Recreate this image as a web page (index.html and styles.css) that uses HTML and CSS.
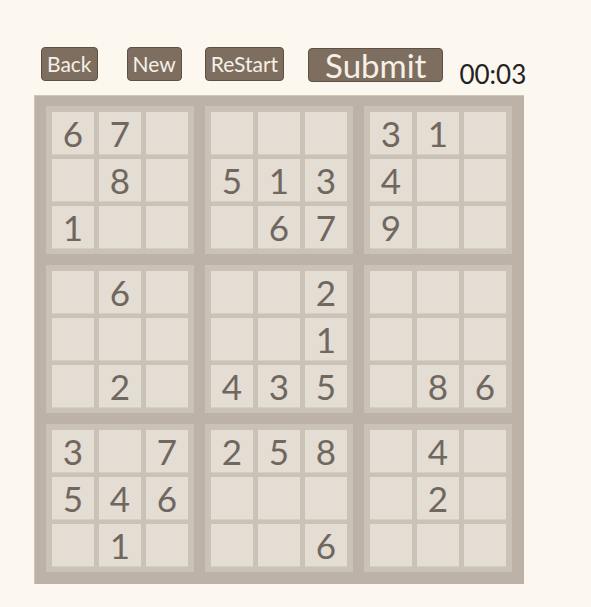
FILE: index.html
```html
<!DOCTYPE html>
<html lang="en">
<head>
<meta charset="utf-8">
<title>Sudoku</title>
<link rel="stylesheet" href="styles.css">
</head>
<body>
<div class="app">
  <div class="toolbar">
    <button class="btn btn-back">Back</button>
    <button class="btn btn-new">New</button>
    <button class="btn btn-restart">ReStart</button>
    <button class="btn btn-submit">Submit</button>
    <span class="timer">00:03</span>
  </div>
  <div class="board">
    <div class="box">
      <div class="cell">6</div><div class="cell">7</div><div class="cell"></div>
      <div class="cell"></div><div class="cell">8</div><div class="cell"></div>
      <div class="cell">1</div><div class="cell"></div><div class="cell"></div>
    </div>
    <div class="box">
      <div class="cell"></div><div class="cell"></div><div class="cell"></div>
      <div class="cell">5</div><div class="cell">1</div><div class="cell">3</div>
      <div class="cell"></div><div class="cell">6</div><div class="cell">7</div>
    </div>
    <div class="box">
      <div class="cell">3</div><div class="cell">1</div><div class="cell"></div>
      <div class="cell">4</div><div class="cell"></div><div class="cell"></div>
      <div class="cell">9</div><div class="cell"></div><div class="cell"></div>
    </div>
    <div class="box">
      <div class="cell"></div><div class="cell">6</div><div class="cell"></div>
      <div class="cell"></div><div class="cell"></div><div class="cell"></div>
      <div class="cell"></div><div class="cell">2</div><div class="cell"></div>
    </div>
    <div class="box">
      <div class="cell"></div><div class="cell"></div><div class="cell">2</div>
      <div class="cell"></div><div class="cell"></div><div class="cell">1</div>
      <div class="cell">4</div><div class="cell">3</div><div class="cell">5</div>
    </div>
    <div class="box">
      <div class="cell"></div><div class="cell"></div><div class="cell"></div>
      <div class="cell"></div><div class="cell"></div><div class="cell"></div>
      <div class="cell"></div><div class="cell">8</div><div class="cell">6</div>
    </div>
    <div class="box">
      <div class="cell">3</div><div class="cell"></div><div class="cell">7</div>
      <div class="cell">5</div><div class="cell">4</div><div class="cell">6</div>
      <div class="cell"></div><div class="cell">1</div><div class="cell"></div>
    </div>
    <div class="box">
      <div class="cell">2</div><div class="cell">5</div><div class="cell">8</div>
      <div class="cell"></div><div class="cell"></div><div class="cell"></div>
      <div class="cell"></div><div class="cell"></div><div class="cell">6</div>
    </div>
    <div class="box">
      <div class="cell"></div><div class="cell">4</div><div class="cell"></div>
      <div class="cell"></div><div class="cell">2</div><div class="cell"></div>
      <div class="cell"></div><div class="cell"></div><div class="cell"></div>
    </div>
  </div>
</div>
</body>
</html>
```

FILE: styles.css
```css
html, body {
  margin: 0;
  padding: 0;
  background: #fcf8f0;
  font-family: Lato, "Liberation Sans", sans-serif;
}

.app {
  padding: 47px 0 0 34px;
}

.toolbar {
  display: flex;
  align-items: flex-start;
  height: 48px;
  padding-left: 7px;
}

.btn {
  box-sizing: border-box;
  height: 34px;
  margin: 0 24px 0 0;
  padding: 0 5px;
  background: #7e6e60;
  color: #f6f0e6;
  border: 1px solid #5e5045;
  border-radius: 4px;
  font-family: Lato, "Liberation Sans", sans-serif;
  font-size: 21px;
  line-height: 32px;
}

.btn-back {
  margin-right: 29px;
}

.btn-new {
  margin-right: 23px;
}

.btn-restart {
  padding: 0 5px;
}

.btn-submit {
  margin-top: 1px;
  margin-right: 16px;
  padding: 0 16px;
  font-size: 33px;
  line-height: 30px;
}

.timer {
  margin-top: 14px;
  font-size: 26px;
  line-height: 26px;
  color: #222;
}

.board {
  width: 490px;
  box-sizing: border-box;
  display: grid;
  grid-template-columns: repeat(3, 148px);
  gap: 11px;
  padding: 11px 12px 12px 12px;
  background: #bcb2a7;
  box-shadow: inset 1px 1px 0 #cfc6bb;
}

.box {
  display: grid;
  grid-template-columns: repeat(3, 42px);
  grid-auto-rows: 42px;
  gap: 5px;
  padding: 6px;
  background: #cbc2b7;
}

.cell {
  background: #e4ddd4;
  color: #70675f;
  font-size: 35px;
  line-height: 42px;
  text-align: center;
  box-shadow: 0 1px 0 #d6cec4;
}
```
